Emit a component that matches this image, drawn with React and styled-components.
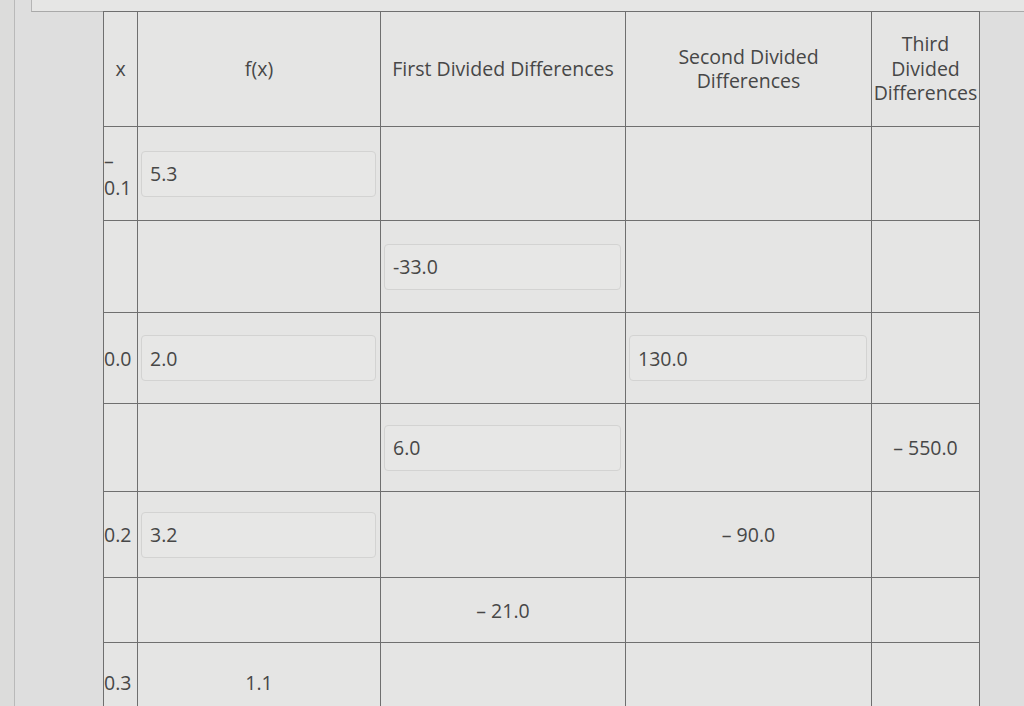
import React from 'react'
import styled, { createGlobalStyle } from 'styled-components'

const GlobalStyle = createGlobalStyle`
  body {
    margin: 0;
    background: #dcdcdb;
    font-family: "Open Sans", "Liberation Sans", sans-serif;
    color: #474747;
  }
`;

const Page = styled.div`
  height: 706px;
  overflow: hidden;
  margin-left: 14px;
  border-left: 1px solid #b9b9b9;
  background: #dedede;
`;

const TopPanel = styled.div`
  height: 11px;
  margin-left: 16px;
  background: #e6e6e5;
  border-left: 1px solid #b5b5b5;
  border-bottom: 1px solid #a9a9a9;
`;

const Table = styled.table`
  border-collapse: collapse;
  margin-left: 88px;
  margin-top: -1px;
  background: #e5e5e4;
  table-layout: fixed;
`;

const Col = styled.col`
  width: ${({ w }) => w}px;
`;

const Row = styled.tr`
  height: ${({ h }) => h}px;
`;

const Head = styled.th`
  border: 1px solid #6f6f6f;
  font-weight: 400;
  font-size: 19.5px;
  line-height: 24.5px;
  text-align: center;
  vertical-align: middle;
  padding: 0;
`;

const Cell = styled.td`
  border: 1px solid #6f6f6f;
  padding: 0;
  vertical-align: middle;
  text-align: ${({ align }) => align || 'center'};
`;

const XValue = styled.div`
  font-size: 19.5px;
  line-height: 27px;
  text-align: left;
`;

const Input = styled.div`
  margin: 0 4px 0 3px;
  height: 44px;
  display: flex;
  align-items: center;
  padding-left: 8px;
  border: 1px solid #d3d3d2;
  border-radius: 4px;
  background: #e7e7e6;
  font-size: 19.5px;
`;

const Plain = styled.span`
  font-size: 19.5px;
`;

const rows = [
  { h: 94, x: ['–', '0.1'], cells: [{ box: '5.3' }, null, null, null] },
  { h: 92, cells: [null, { box: '-33.0' }, null, null] },
  { h: 91, x: ['0.0'], cells: [{ box: '2.0' }, null, { box: '130.0' }, null] },
  { h: 88, cells: [null, { box: '6.0' }, null, { text: '– 550.0' }] },
  { h: 86, x: ['0.2'], cells: [{ box: '3.2' }, null, { text: '– 90.0' }, null] },
  { h: 65, cells: [null, { text: '– 21.0' }, null, null] },
  { h: 80, x: ['0.3'], cells: [{ text: '1.1' }, null, null, null] },
];

const renderCell = (c, i) => {
  if (!c) return <Cell key={i} />;
  if (c.box) return <Cell key={i}><Input>{c.box}</Input></Cell>;
  return <Cell key={i}><Plain>{c.text}</Plain></Cell>;
};

const App = () => {
  return (
    <>
      <GlobalStyle />
      <Page>
        <TopPanel />
        <Table>
          <colgroup>
            <Col w={34} />
            <Col w={243} />
            <Col w={245} />
            <Col w={246} />
            <Col w={108} />
          </colgroup>
          <tbody>
            <Row h={115}>
              <Head>x</Head>
              <Head>f(x)</Head>
              <Head>First Divided Differences</Head>
              <Head>Second Divided<br />Differences</Head>
              <Head>Third<br />Divided<br />Differences</Head>
            </Row>
            {rows.map((r, ri) => (
              <Row key={ri} h={r.h}>
                <Cell align="left">
                  {r.x && r.x.map((t, ti) => <XValue key={ti}>{t}</XValue>)}
                </Cell>
                {r.cells.map(renderCell)}
              </Row>
            ))}
          </tbody>
        </Table>
      </Page>
    </>
  )
}

export default App
